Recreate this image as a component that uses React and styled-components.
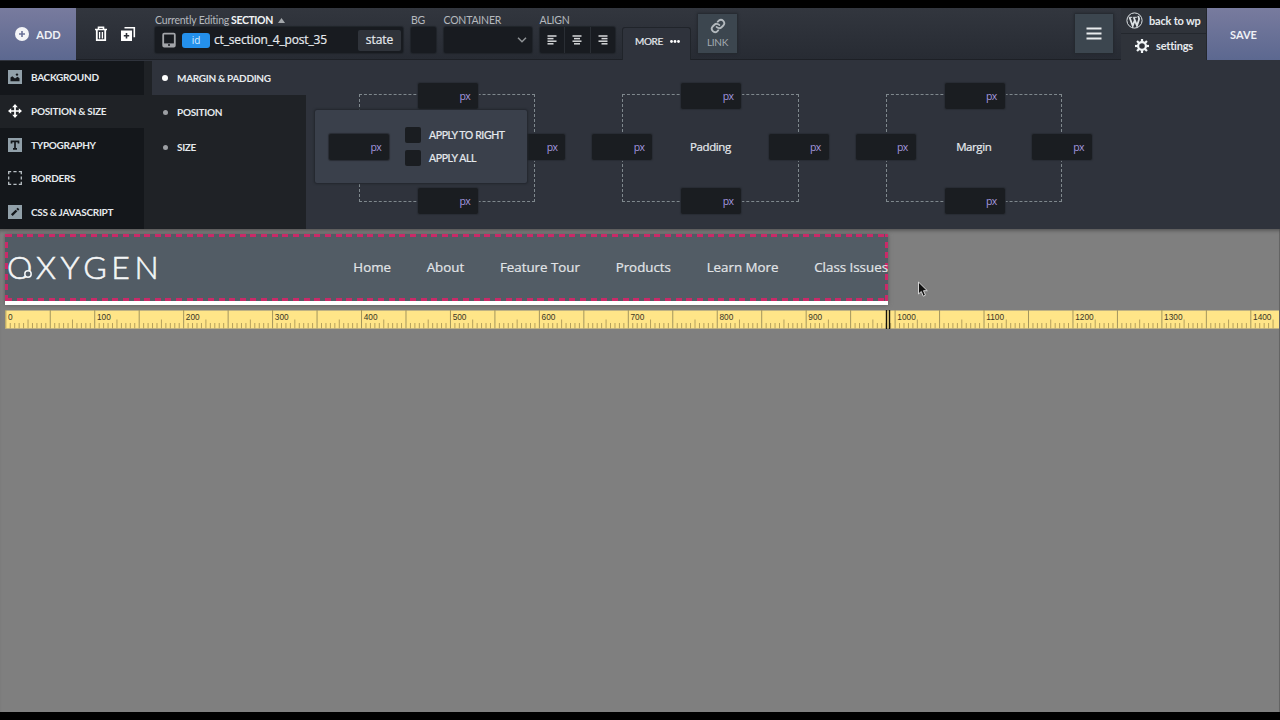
import { createGlobalStyle } from 'styled-components'
import styled from 'styled-components'

const GlobalStyle = createGlobalStyle`
  * {
    box-sizing: border-box;
  }
  body {
    margin: 0;
    background-color: #000;
    font-family: Lato, 'Liberation Sans', sans-serif;
    overflow: hidden;
  }
`

const Screen = styled.div`
  display: flex;
  flex-direction: column;
  width: 1280px;
  height: 720px;
  padding: 8px 0;
  background-color: #000;
  color: #e6eaee;
`

const Toolbar = styled.header`
  display: flex;
  flex: none;
  height: 52px;
  background: linear-gradient(#32363e, #272b33);
  box-shadow: inset 0 -1px 0 #1d2026;
`

const BigButton = styled.div`
  display: flex;
  align-items: center;
  justify-content: center;
  gap: ${props => props.$gap || 0}px;
  width: ${props => props.$width}px;
  background: linear-gradient(#787b9e, #5c6890);
  color: #eff1f6;
  font-size: 11px;
  font-weight: 700;
`

const Actions = styled.div`
  display: flex;
  align-items: center;
  gap: 12px;
  width: 79px;
  padding-left: 18px;
`

const Field = styled.div`
  display: flex;
  flex-direction: column;
  width: ${props => props.$width}px;
  margin-right: ${props => props.$gap}px;
  padding-top: 5px;
`

const Label = styled.div`
  display: flex;
  align-items: center;
  height: 14px;
  color: #b5b9be;
  font-size: 10.5px;
  line-height: 14px;
  white-space: nowrap;
  letter-spacing: -0.2px;
  b {
    margin-left: 2px;
    color: #f2f4f6;
    letter-spacing: -0.4px;
  }
  svg {
    margin-left: 5px;
  }
`

const Box = styled.div`
  display: flex;
  align-items: center;
  height: 26px;
  background-color: #181b20;
  border-radius: 2px;
  box-shadow: 0 0 1px 1px #20242a;
`

const IdTag = styled.span`
  width: 28px;
  height: 15px;
  margin: 0 4px 0 6px;
  background-color: #2490ec;
  border-radius: 3px;
  color: #d8efff;
  font: 10px/15px 'Open Sans', sans-serif;
  text-align: center;
`

const Selector = styled.span`
  flex: 1;
  font: 12px/20px 'Open Sans', sans-serif;
  letter-spacing: -0.17px;
  -webkit-text-stroke: 0.2px;
`

const StateButton = styled.span`
  width: 43px;
  height: 21px;
  margin-right: 2px;
  background-color: #2f333a;
  border-radius: 2px;
  font: 12px/20px 'Open Sans', sans-serif;
  text-align: center;
  -webkit-text-stroke: 0.2px;
`

const AlignCell = styled.span`
  display: flex;
  flex: 1;
  height: 100%;
  align-items: center;
  justify-content: center;
  & + & {
    border-left: 1px solid #2a2e34;
  }
`

const MoreTab = styled.div`
  display: flex;
  align-items: center;
  gap: 7px;
  width: 69px;
  height: 33px;
  margin: 19px 7px 0 -1px;
  padding: 0 0 6px 12px;
  background-color: #2f333c;
  border: 1px solid #20242a;
  border-bottom: 0;
  border-radius: 3px 3px 0 0;
  font-size: 10px;
  letter-spacing: -0.35px;
  -webkit-text-stroke: 0.2px;
`

const SquareButton = styled.div`
  display: flex;
  flex-direction: column;
  align-items: center;
  justify-content: center;
  gap: 1px;
  width: ${props => props.$width || 39}px;
  height: 39px;
  margin-top: 6px;
  background-color: #3c464f;
  box-shadow: 0 0 2px 1px #24282e;
  color: #a4abb1;
  font-size: 10px;
  line-height: 14px;
  letter-spacing: -0.3px;
`

const RightSide = styled.div`
  display: flex;
  margin-left: auto;
`

const LinkList = styled.div`
  display: flex;
  flex-direction: column;
  width: 86px;
  margin-left: 8px;
  background-color: #2f333a;
  border-right: 1px solid #23272d;
`

const LinkItem = styled.div`
  display: flex;
  align-items: center;
  gap: ${props => props.$gap}px;
  height: ${props => props.$height}px;
  padding: 0 0 1px ${props => props.$indent}px;
  font-size: 11px;
  font-weight: 700;
  letter-spacing: -0.2px;
  white-space: nowrap;
  & + & {
    padding-bottom: 3px;
    border-top: 1px solid #23272d;
  }
`

const Panel = styled.section`
  display: flex;
  flex: none;
  height: 169px;
  padding-top: 1px;
  background-color: #2f333c;
`

const Sidebar = styled.nav`
  width: 144px;
  background-color: #14171b;
`

const SidebarItem = styled.div`
  display: flex;
  align-items: center;
  gap: 9px;
  height: 33.7px;
  padding: 0 0 1px 8px;
  background-color: ${props => props.$active ? '#1f2226' : 'transparent'};
  font-size: 10px;
  font-weight: 700;
  letter-spacing: -0.3px;
`

const SubMenu = styled.nav`
  width: 162px;
  padding-left: 8px;
  background-color: #1f2226;
`

const SubItem = styled.div`
  display: flex;
  align-items: center;
  gap: 9px;
  height: ${props => props.$active ? 34 : 35}px;
  padding: 0 0 1px ${props => props.$active ? 10 : 11}px;
  background-color: ${props => props.$active ? '#2f333c' : 'transparent'};
  font-size: 10px;
  font-weight: 700;
  letter-spacing: -0.3px;
  &::before {
    content: '';
    width: ${props => props.$active ? 6 : 5}px;
    height: ${props => props.$active ? 6 : 5}px;
    border-radius: 50%;
    background-color: ${props => props.$active ? '#fff' : '#9c9fa3'};
  }
`

const Groups = styled.div`
  display: flex;
  gap: 27px;
  padding: 22px 0 0 23px;
`

const Group = styled.div`
  position: relative;
  display: grid;
  grid-template-columns: 60px 29px 60px 27.3px 60px;
  grid-template-rows: 50.5px 54px 26px;
  height: 131px;
`

const Frame = styled.div`
  grid-area: 1 / 1 / -1 / -1;
  margin: 11px 30px 12px;
  border: 1px dashed #7f888d;
`

const areas = {
  top: '1 / 3',
  left: '2 / 1',
  right: '2 / 5',
  bottom: '3 / 3'
}

const Measure = styled.div`
  grid-area: ${props => areas[props.$side]};
  width: 60px;
  height: 26px;
  padding-right: 8px;
  background-color: #1a1d21;
  border-radius: 2px;
  box-shadow: 0 0 1px 1px #282c33;
  color: #a297df;
  font: 10.5px/26px 'Open Sans', sans-serif;
  letter-spacing: -0.7px;
  text-align: right;
`

const GroupTitle = styled.div`
  grid-area: 2 / 2 / 3 / 5;
  font: 11.5px/26px 'Open Sans', sans-serif;
  letter-spacing: -0.4px;
  text-align: center;
  -webkit-text-stroke: 0.2px;
`

const Popup = styled.div`
  position: absolute;
  top: 27px;
  left: -14px;
  display: flex;
  align-items: center;
  width: 212px;
  height: 73px;
  padding: 0 14px;
  background-color: #3a404b;
  border-radius: 2px;
  box-shadow: 0 0 2px 1px #22262d;
`

const Options = styled.div`
  display: flex;
  flex-direction: column;
  gap: 7px;
  margin-left: 16px;
`

const Option = styled.div`
  display: flex;
  align-items: center;
  gap: 8px;
  height: 16px;
  font-size: 10.5px;
  line-height: 15px;
  letter-spacing: -0.38px;
  white-space: nowrap;
  -webkit-text-stroke: 0.2px;
  &::before {
    content: '';
    width: 16px;
    height: 16px;
    background-color: #1a1d21;
    border-radius: 2px;
  }
`

const Canvas = styled.main`
  flex: 1;
  padding: 5px 0 0 5px;
  background-color: #7f7f7f;
  box-shadow: inset 0 4px 4px -3px #4a4a4a, inset -1px 0 0 #666;
`

const dashes = 'repeating-linear-gradient'

const Section = styled.div`
  display: flex;
  align-items: center;
  justify-content: space-between;
  width: 883px;
  height: 67px;
  padding: 0 0 1px 2px;
  background:
    ${dashes}(90deg, #c92a68 0 6px, transparent 6px 10.63px) 1px 0 / 100% 3px no-repeat,
    ${dashes}(90deg, #c92a68 0 6px, transparent 6px 10.63px) 1px 100% / 100% 3px no-repeat,
    ${dashes}(0deg, #c92a68 0 6px, transparent 6px 10.63px) 0 0 / 3px 100% no-repeat,
    ${dashes}(0deg, #c92a68 0 6px, transparent 6px 10.63px) 100% 0 / 3px 100% no-repeat,
    #525c65;
`

const Page = styled.div`
  width: 883px;
  height: 71px;
  background-color: #fff;
  box-shadow: 0 0 4px #5a5a5a;
`

const Logo = styled.div`
  position: relative;
  color: #f4f6f7;
  font-size: 32px;
  font-weight: 300;
  line-height: 40px;
  letter-spacing: 4.6px;
  -webkit-text-stroke: 0.6px;
  svg {
    position: absolute;
    left: 16px;
    top: 22px;
  }
`

const Menu = styled.nav`
  display: flex;
  gap: 35.7px;
  color: #e2e5e8;
  font: 13.33px/20px 'Open Sans', sans-serif;
  white-space: nowrap;
  -webkit-text-stroke: 0.2px;
`

const Ruler = styled.svg`
  display: block;
  margin-top: 5px;
`

const Cursor = styled.svg`
  position: absolute;
  left: 917px;
  top: 281px;
`

const AddIcon = () => (
  <svg width='14' height='14' viewBox='0 0 14 14'>
    <circle cx='7' cy='7' r='7' fill='#f4f5f8' />
    <path d='M7 4v6M4 7h6' stroke='#6b7399' strokeWidth='1.6' />
  </svg>
)

const TrashIcon = () => (
  <svg width='14' height='16' viewBox='0 0 14 16'>
    <path d='M1 3.5h12M4.5 3V1.2h5V3' fill='none' stroke='#fff' strokeWidth='1.6' />
    <path d='M2.8 4v10.2h8.4V4' fill='none' stroke='#fff' strokeWidth='1.8' />
    <path d='M5.6 6v6.5M8.4 6v6.5' stroke='#fff' strokeWidth='1.3' />
  </svg>
)

const DuplicateIcon = () => (
  <svg width='16' height='16' viewBox='0 0 16 16'>
    <path d='M4.5 1.8h9.8v9.4' fill='none' stroke='#fff' strokeWidth='1.6' />
    <path d='M1 4.5h11V15H1z' fill='#fff' />
    <path d='M6.5 7v5.5M3.8 9.7h5.4' stroke='#2b2f37' strokeWidth='1.6' />
  </svg>
)

const Tablet = styled.svg`
  margin-left: 7px;
`

const TabletIcon = () => (
  <Tablet width='14' height='16' viewBox='0 0 14 16'>
    <rect x='1.2' y='1.7' width='11.6' height='12.8' rx='1' fill='none' stroke='#a3a5a9' strokeWidth='1.8' />
    <path d='M1 11.4h12V14H1z' fill='#a3a5a9' />
    <circle cx='7' cy='13' r='1' fill='#181b20' />
  </Tablet>
)

const Chevron = styled.svg`
  margin-left: 73px;
`

// left edge of the short lines
const shortLineStart = { left: 0.5, center: 2, right: 3.5 }

const AlignIcon = ({ align }) => (
  <svg width='10' height='10' viewBox='0 0 10 10'>
    {[1, 3.6, 6.2, 8.8].map((y, i) => {
      const short = i % 2 === 1
      const length = short ? 6 : 9
      const x = short ? shortLineStart[align] : 0.5
      return <path key={y} d={`M${x} ${y}h${length}`} stroke='#d6d8da' strokeWidth='1.5' />
    })}
  </svg>
)

const ChainIcon = () => (
  <svg width='16' height='16' viewBox='0 0 24 24' fill='none' stroke='#b3b9be' strokeWidth='2.8' strokeLinecap='round'>
    <path d='M10 13.5a5 5 0 0 0 7.3.4l3-3a5 5 0 0 0-7-7l-1.6 1.6' />
    <path d='M14 10.5a5 5 0 0 0-7.3-.4l-3 3a5 5 0 0 0 7 7l1.6-1.6' />
  </svg>
)

const WordpressIcon = () => (
  <svg width='17' height='17' viewBox='0 0 17 17' fill='none' stroke='#dde2e5'>
    <circle cx='8.5' cy='8.5' r='7.6' strokeWidth='1' />
    <path d='M2.7 5.3h3.6M7.2 5.3h3.6' strokeWidth='1' />
    <path d='M3.6 5.5l3.1 8.4 2.2-6M7.8 5.5l3.2 8.2 2-6.2c.5-1.5-.9-2.1-.6-3.6' strokeWidth='1.8' />
  </svg>
)

const GearIcon = () => (
  <svg width='14' height='14' viewBox='0 0 14 14' fill='none' stroke='#f0f4f6'>
    <circle cx='7' cy='7' r='3.9' strokeWidth='2.2' />
    {[0, 45, 90, 135, 180, 225, 270, 315].map(angle => (
      <path key={angle} d='M7 0v2.8' strokeWidth='2.2' transform={`rotate(${angle} 7 7)`} />
    ))}
  </svg>
)

const sidebarIcons = {
  background: (
    <>
      <path d='M0 0h14v14H0z' fill='#91a0a9' />
      <path d='M2.5 11.2V7.6l1.8-1.4L7 8.4l2.5-1.6 2 1.4v3z' fill='#14171b' />
      <circle cx='9' cy='4.6' r='1.2' fill='#14171b' />
    </>
  ),
  position: (
    <>
      <path d='M7 2v10M2 7h10' stroke='#fff' strokeWidth='1.7' />
      <path d='M7 0l2.8 3.2H4.2zM7 14l2.8-3.2H4.2zM0 7l3.2-2.8v5.6zM14 7l-3.2-2.8v5.6z' fill='#fff' />
    </>
  ),
  typography: (
    <>
      <path d='M0 0h14v14H0z' fill='#91a0a9' />
      <path d='M3.5 5.4V3.3h7v2.1M7 3.3v7.6M5 10.9h4' fill='none' stroke='#14171b' strokeWidth='1.7' />
    </>
  ),
  borders: (
    <path
      d='M.7 3.2V.7h2.5M5.4.7h3.2M10.8.7h2.5v2.5M13.3 5.4v3.2M13.3 10.8v2.5h-2.5M8.6 13.3H5.4M3.2 13.3H.7v-2.5M.7 8.6V5.4'
      fill='none'
      stroke='#b9c0c5'
      strokeWidth='1.3'
    />
  ),
  code: (
    <>
      <path d='M0 0h14v14H0z' fill='#91a0a9' />
      <path d='M3.8 10.2l4.7-4.7M9.2 4.8l1.3-1.3' stroke='#14171b' strokeWidth='2.4' />
    </>
  )
}

const SidebarIcon = ({ name }) => (
  <svg width='14' height='14' viewBox='0 0 14 14'>{sidebarIcons[name]}</svg>
)

const sidebarItems = [
  ['background', 'BACKGROUND'],
  ['position', 'POSITION & SIZE'],
  ['typography', 'TYPOGRAPHY'],
  ['borders', 'BORDERS'],
  ['code', 'CSS & JAVASCRIPT']
]

const menuItems = ['Home', 'About', 'Feature Tour', 'Products', 'Learn More', 'Class Issues']

const MeasureGroup = ({ title, children }) => (
  <Group>
    <Frame />
    <Measure $side='top'>px</Measure>
    <Measure $side='left'>px</Measure>
    {title && <GroupTitle>{title}</GroupTitle>}
    <Measure $side='right'>px</Measure>
    <Measure $side='bottom'>px</Measure>
    {children}
  </Group>
)

const tickTop = value => {
  if (value % 50 === 0) return 0
  return value % 25 === 0 ? 9.5 : 13
}

const WidthRuler = () => {
  const scale = 0.8893
  const ticks = Array.from({ length: 286 }, (_, i) => i * 5)
  return (
    <Ruler width='1274' height='19' viewBox='0 0 1274 19'>
      <path d='M0 .4h1274v18H0z' fill='#ffe588' />
      {ticks.map(value => (
        <path
          key={value}
          d={`M${value * scale + 0.8} ${tickTop(value)}V18.4`}
          stroke={value % 50 === 0 ? '#a3955e' : '#b5a05e'}
          strokeWidth='1'
        />
      ))}
      {ticks.filter(value => value % 100 === 0).map(value => (
        <text key={value} x={value * scale + 3} y='9.7' fontSize='8.3' fontFamily='Liberation Sans, sans-serif' fill='#3a3626'>
          {value}
        </text>
      ))}
      <path d='M881.5 0v19M884.5 0v19' stroke='#14130c' strokeWidth='1.4' />
    </Ruler>
  )
}

const App = () => (
  <Screen>
    <GlobalStyle />
    <Toolbar>
      <BigButton $width={76} $gap={7}><AddIcon />ADD</BigButton>
      <Actions><TrashIcon /><DuplicateIcon /></Actions>
      <Field $width={248} $gap={8}>
        <Label>
          Currently Editing <b>SECTION</b>
          <svg width='7' height='5' viewBox='0 0 7 5'><path d='M3.5 0L7 5H0z' fill='#a3a7ab' /></svg>
        </Label>
        <Box>
          <TabletIcon />
          <IdTag>id</IdTag>
          <Selector>ct_section_4_post_35</Selector>
          <StateButton>state</StateButton>
        </Box>
      </Field>
      <Field $width={25} $gap={7.5}>
        <Label>BG</Label>
        <Box />
      </Field>
      <Field $width={88.5} $gap={7.5}>
        <Label>CONTAINER</Label>
        <Box>
          <Chevron width='10' height='6' viewBox='0 0 10 6'>
            <path d='M1 .8l4 4 4-4' fill='none' stroke='#8f9396' strokeWidth='1.5' />
          </Chevron>
        </Box>
      </Field>
      <Field $width={75.5} $gap={8}>
        <Label>ALIGN</Label>
        <Box>
          {['left', 'center', 'right'].map(align => (
            <AlignCell key={align}><AlignIcon align={align} /></AlignCell>
          ))}
        </Box>
      </Field>
      <MoreTab>
        MORE
        <svg width='10' height='3' viewBox='0 0 10 3' fill='#fff'>
          <circle cx='1.5' cy='1.5' r='1.4' />
          <circle cx='5' cy='1.5' r='1.4' />
          <circle cx='8.5' cy='1.5' r='1.4' />
        </svg>
      </MoreTab>
      <SquareButton><ChainIcon />LINK</SquareButton>
      <RightSide>
        <SquareButton $width={38}>
          <svg width='16' height='16' viewBox='0 0 16 16'>
            <path d='M.5 2.5h15M.5 7.5h15M.5 12.5h15' stroke='#e9ecee' strokeWidth='1.8' />
          </svg>
        </SquareButton>
        <LinkList>
          <LinkItem $height={25} $indent={5} $gap={6}><WordpressIcon />back to wp</LinkItem>
          <LinkItem $height={27} $indent={14} $gap={7}><GearIcon />settings</LinkItem>
        </LinkList>
        <BigButton $width={73}>SAVE</BigButton>
      </RightSide>
    </Toolbar>
    <Panel>
      <Sidebar>
        {sidebarItems.map(([name, text]) => (
          <SidebarItem key={name} $active={name === 'position'}>
            <SidebarIcon name={name} />{text}
          </SidebarItem>
        ))}
      </Sidebar>
      <SubMenu>
        <SubItem $active>MARGIN & PADDING</SubItem>
        <SubItem>POSITION</SubItem>
        <SubItem>SIZE</SubItem>
      </SubMenu>
      <Groups>
        <MeasureGroup>
          <Popup>
            <Measure>px</Measure>
            <Options>
              <Option>APPLY TO RIGHT</Option>
              <Option>APPLY ALL</Option>
            </Options>
          </Popup>
        </MeasureGroup>
        <MeasureGroup title='Padding' />
        <MeasureGroup title='Margin' />
      </Groups>
    </Panel>
    <Canvas>
      <Page>
        <Section>
          <Logo>
            OXYGEN
            <svg width='10' height='10' viewBox='0 0 10 10'>
              <circle cx='5' cy='5' r='3.2' fill='#525c65' stroke='#f4f6f7' strokeWidth='1.5' />
            </svg>
          </Logo>
          <Menu>
            {menuItems.map(item => <span key={item}>{item}</span>)}
          </Menu>
        </Section>
      </Page>
      <WidthRuler />
      <Cursor width='12' height='18' viewBox='0 0 12 18'>
        <path d='M1.5 1v12l2.8-2.5 1.9 4.7 2.3-1-2-4.5h3.8z' fill='#111' stroke='#d5d5d5' strokeWidth='1' />
      </Cursor>
    </Canvas>
  </Screen>
)

export default App
